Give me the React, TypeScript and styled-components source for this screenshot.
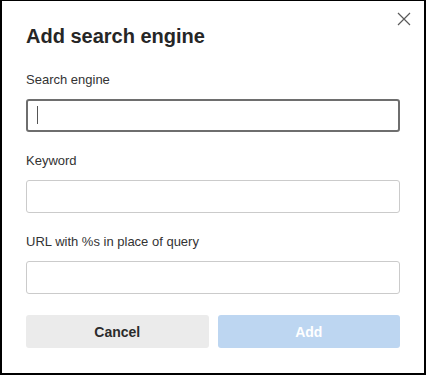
import React from "react";
import styled, { createGlobalStyle } from "styled-components";

const Global = createGlobalStyle`
  html, body { margin: 0; padding: 0; background: #fff; }
  body { font-family: "Liberation Sans", Arial, Helvetica, sans-serif; }
  * { box-sizing: border-box; }
`;

const Dialog = styled.div`
  position: relative;
  width: 426px;
  height: 375px;
  background: #fff;
  border-style: solid;
  border-color: #000;
  border-width: 1px 2px 2px 2px;
  padding: 23px 24px 0 24px;
  display: flex;
  flex-direction: column;
`;

const Title = styled.h1`
  margin: 0 0 24px 0;
  font-size: 20px;
  line-height: 24px;
  font-weight: 700;
  color: #262626;
`;

const CloseButton = styled.button`
  position: absolute;
  top: 10px;
  right: 12px;
  width: 16px;
  height: 16px;
  padding: 0;
  border: none;
  background: transparent;
  display: flex;
  align-items: center;
  justify-content: center;
  cursor: pointer;
`;

const Field = styled.div`
  display: flex;
  flex-direction: column;
  gap: 11px;
  margin-bottom: 21px;
`;

const Label = styled.label`
  font-size: 13px;
  line-height: 16px;
  color: #333;
`;

const InputWrap = styled.div`
  position: relative;
`;

const Input = styled.input<{ $focused?: boolean }>`
  display: block;
  width: 100%;
  height: 33px;
  margin: 0;
  padding: 0 9px;
  border-radius: 3px;
  border: ${(p) => (p.$focused ? "2px solid #6e6e6e" : "1px solid #cbcbcb")};
  padding-left: ${(p) => (p.$focused ? "9px" : "10px")};
  font-family: inherit;
  font-size: 13px;
  color: #222;
  background: #fff;
  outline: none;
`;

const Caret = styled.span`
  position: absolute;
  left: 11px;
  top: 7px;
  width: 1px;
  height: 18px;
  background: #555;
`;

const Buttons = styled.div`
  display: grid;
  grid-template-columns: 1fr 1fr;
  gap: 9px;
`;

const Button = styled.button<{ $primary?: boolean }>`
  height: 33px;
  border: none;
  border-radius: 3px;
  font-family: inherit;
  font-size: 14px;
  font-weight: 700;
  background: ${(p) => (p.$primary ? "#bdd6f1" : "#ebebeb")};
  color: ${(p) => (p.$primary ? "#ffffff" : "#2b2b2b")};
  cursor: pointer;
`;

export default function App() {
  return (
    <>
      <Global />
      <Dialog>
        <CloseButton aria-label="Close">
          <svg width="14" height="14" viewBox="0 0 14 14">
            <path d="M1 1 L13 13 M13 1 L1 13" stroke="#5a5a5a" strokeWidth="1.2" fill="none" />
          </svg>
        </CloseButton>
        <Title>Add search engine</Title>
        <Field>
          <Label>Search engine</Label>
          <InputWrap>
            <Input $focused />
            <Caret />
          </InputWrap>
        </Field>
        <Field>
          <Label>Keyword</Label>
          <Input />
        </Field>
        <Field>
          <Label>URL with %s in place of query</Label>
          <Input />
        </Field>
        <Buttons>
          <Button>Cancel</Button>
          <Button $primary disabled>Add</Button>
        </Buttons>
      </Dialog>
    </>
  );
}
